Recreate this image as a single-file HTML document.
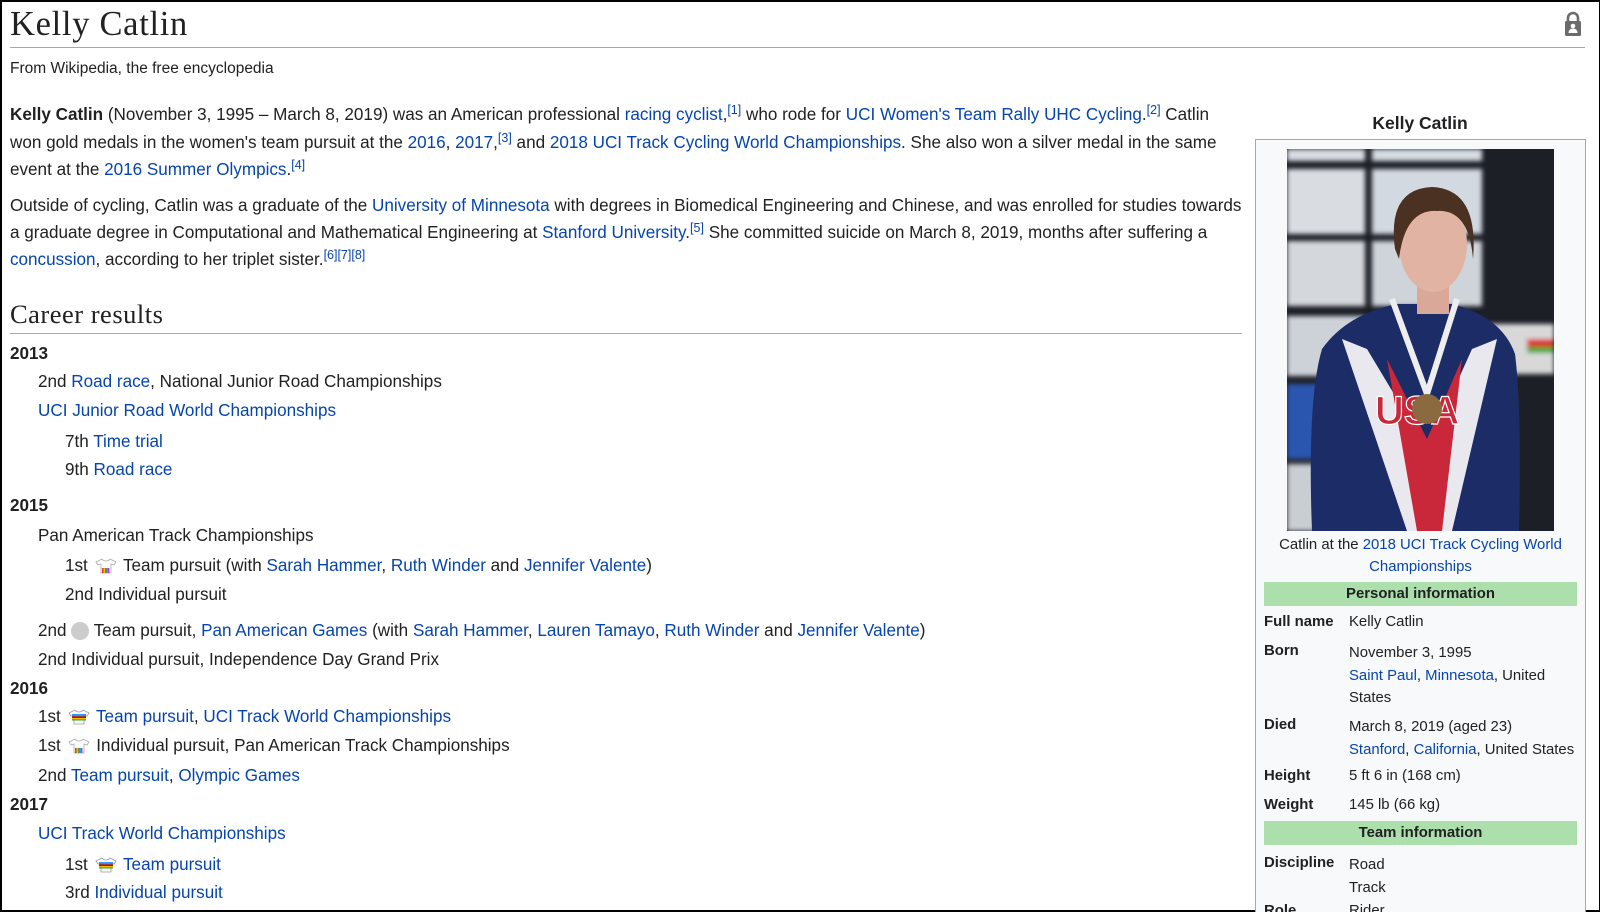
<!DOCTYPE html>
<html><head><meta charset="utf-8">
<style>
*{margin:0;padding:0;box-sizing:border-box}
html,body{width:1600px;height:912px;overflow:hidden;background:#fff}
body{font-family:"Liberation Sans",Arial,sans-serif;color:#202122;position:relative;border-left:2px solid #000;border-top:2px solid #000;border-right:1px solid #000;border-bottom:2px solid #000}
.a{position:absolute;white-space:nowrap}
.t{font-size:17.1px;line-height:20px}
a,.l{color:#0645ad;text-decoration:none}
sup{font-size:12.5px;vertical-align:6px;line-height:0;color:#0645ad}
b{font-weight:bold}
.h{font-family:"Liberation Serif",serif}
.ib{font-size:14.9px;line-height:18px}
.jer{display:inline-block;width:22px;height:16px;vertical-align:-3px;margin:0 2px}
</style></head><body>
<div class="a h" style="left:8px;top:2px;font-size:34.5px;line-height:40px;letter-spacing:0.7px">Kelly Catlin</div>
<div class="a" style="left:8px;top:45px;width:1575px;height:1px;background:#a2a9b1"></div>
<svg class="a" style="left:1562px;top:9px" width="18" height="26" viewBox="0 0 18 26"><path d="M4 11V7a5 5 0 0 1 10 0v4" fill="none" stroke="#6b6b6b" stroke-width="2.6"/><rect x="1" y="10" width="16" height="15" rx="1.5" fill="#6b6b6b"/><circle cx="9" cy="15" r="2.3" fill="#fff"/><path d="M4.5 22c0-3 2-4.5 4.5-4.5s4.5 1.5 4.5 4.5z" fill="#fff"/></svg>
<div class="a" style="left:8px;top:58px;font-size:15.5px">From Wikipedia, the free encyclopedia</div>

<div class="a t" style="left:8px;top:103px"><b>Kelly Catlin</b> (November 3, 1995 – March 8, 2019) was an American professional <a>racing cyclist</a>,<sup>[1]</sup> who rode for <a>UCI Women's Team Rally UHC Cycling</a>.<sup>[2]</sup> Catlin</div>
<div class="a t" style="left:8px;top:131px">won gold medals in the women's team pursuit at the <a>2016</a>, <a>2017</a>,<sup>[3]</sup> and <a>2018 UCI Track Cycling World Championships</a>. She also won a silver medal in the same</div>
<div class="a t" style="left:8px;top:158px">event at the <a>2016 Summer Olympics</a>.<sup>[4]</sup></div>
<div class="a t" style="left:8px;top:194px">Outside of cycling, Catlin was a graduate of the <a>University of Minnesota</a> with degrees in Biomedical Engineering and Chinese, and was enrolled for studies towards</div>
<div class="a t" style="left:8px;top:221px">a graduate degree in Computational and Mathematical Engineering at <a>Stanford University</a>.<sup>[5]</sup> She committed suicide on March 8, 2019, months after suffering a</div>
<div class="a t" style="left:8px;top:248px"><a>concussion</a>, according to her triplet sister.<sup>[6][7][8]</sup></div>

<div class="a h" style="left:8px;top:297px;font-size:26.5px;line-height:30px;letter-spacing:0.5px">Career results</div>
<div class="a" style="left:8px;top:331px;width:1232px;height:1px;background:#a2a9b1"></div>

<div class="a t" style="left:8px;top:342px"><b>2013</b></div>
<div class="a t" style="left:36px;top:370px">2nd <a>Road race</a>, National Junior Road Championships</div>
<div class="a t" style="left:36px;top:399px"><a>UCI Junior Road World Championships</a></div>
<div class="a t" style="left:63px;top:430px">7th <a>Time trial</a></div>
<div class="a t" style="left:63px;top:458px">9th <a>Road race</a></div>
<div class="a t" style="left:8px;top:494px"><b>2015</b></div>
<div class="a t" style="left:36px;top:524px">Pan American Track Championships</div>
<div class="a t" style="left:63px;top:554px">1st <svg class="jer" viewBox="0 0 22 16"><path d="M7 1L1 4l2 3 3-1v9h10V6l3 1 2-3-6-3c-1 1.5-2.5 2-4 2s-3-.5-4-2z" fill="#fff" stroke="#aaa" stroke-width=".8"/><rect x="7" y="10" width="1.5" height="5" fill="#e33"/><rect x="8.5" y="10" width="1.5" height="5" fill="#fb0"/><rect x="10" y="10" width="1.5" height="5" fill="#3a3"/><rect x="11.5" y="10" width="1.5" height="5" fill="#39f"/><rect x="13" y="10" width="1.5" height="5" fill="#c3c"/></svg> Team pursuit (with <a>Sarah Hammer</a>, <a>Ruth Winder</a> and <a>Jennifer Valente</a>)</div>
<div class="a t" style="left:63px;top:583px">2nd Individual pursuit</div>
<div class="a t" style="left:36px;top:619px">2nd <span style="display:inline-block;width:18px;height:18px;border-radius:50%;background:#ccc;vertical-align:-4px"></span> Team pursuit, <a>Pan American Games</a> (with <a>Sarah Hammer</a>, <a>Lauren Tamayo</a>, <a>Ruth Winder</a> and <a>Jennifer Valente</a>)</div>
<div class="a t" style="left:36px;top:648px">2nd Individual pursuit, Independence Day Grand Prix</div>
<div class="a t" style="left:8px;top:677px"><b>2016</b></div>
<div class="a t" style="left:36px;top:705px">1st <svg class="jer" viewBox="0 0 22 16"><path d="M7 1L1 4l2 3 3-1v9h10V6l3 1 2-3-6-3c-1 1.5-2.5 2-4 2s-3-.5-4-2z" fill="#fff" stroke="#999" stroke-width=".8"/><rect x="4" y="5" width="14" height="1.3" fill="#39f"/><rect x="4" y="6.3" width="14" height="1.3" fill="#e33"/><rect x="4" y="7.6" width="14" height="1.3" fill="#222"/><rect x="4" y="8.9" width="14" height="1.3" fill="#fb0"/><rect x="4" y="10.2" width="14" height="1.3" fill="#3a3"/></svg> <a>Team pursuit</a>, <a>UCI Track World Championships</a></div>
<div class="a t" style="left:36px;top:734px">1st <svg class="jer" viewBox="0 0 22 16"><path d="M7 1L1 4l2 3 3-1v9h10V6l3 1 2-3-6-3c-1 1.5-2.5 2-4 2s-3-.5-4-2z" fill="#fff" stroke="#aaa" stroke-width=".8"/><rect x="7" y="10" width="1.5" height="5" fill="#e33"/><rect x="8.5" y="10" width="1.5" height="5" fill="#fb0"/><rect x="10" y="10" width="1.5" height="5" fill="#3a3"/><rect x="11.5" y="10" width="1.5" height="5" fill="#39f"/><rect x="13" y="10" width="1.5" height="5" fill="#c3c"/></svg> Individual pursuit, Pan American Track Championships</div>
<div class="a t" style="left:36px;top:764px">2nd <a>Team pursuit</a>, <a>Olympic Games</a></div>
<div class="a t" style="left:8px;top:793px"><b>2017</b></div>
<div class="a t" style="left:36px;top:822px"><a>UCI Track World Championships</a></div>
<div class="a t" style="left:63px;top:853px">1st <svg class="jer" viewBox="0 0 22 16"><path d="M7 1L1 4l2 3 3-1v9h10V6l3 1 2-3-6-3c-1 1.5-2.5 2-4 2s-3-.5-4-2z" fill="#fff" stroke="#999" stroke-width=".8"/><rect x="4" y="5" width="14" height="1.3" fill="#39f"/><rect x="4" y="6.3" width="14" height="1.3" fill="#e33"/><rect x="4" y="7.6" width="14" height="1.3" fill="#222"/><rect x="4" y="8.9" width="14" height="1.3" fill="#fb0"/><rect x="4" y="10.2" width="14" height="1.3" fill="#3a3"/></svg> <a>Team pursuit</a></div>
<div class="a t" style="left:63px;top:881px">3rd <a>Individual pursuit</a></div>

<!-- infobox -->
<div class="a" style="left:1253px;top:111px;width:330px;text-align:center;font-weight:bold;font-size:17.5px">Kelly Catlin</div>
<div class="a" style="left:1253px;top:137px;width:331px;height:790px;background:#f8f9fa;border:1px solid #a2a9b1"></div>
<svg class="a" style="left:1285px;top:147px" width="267" height="382" viewBox="0 0 267 382">
<defs><filter id="bl"><feGaussianBlur stdDeviation="2.5"/></filter></defs>
<rect width="267" height="382" fill="#1c1f26"/>
<g filter="url(#bl)">
<rect x="0" y="0" width="78" height="12" fill="#d8dde3"/><rect x="85" y="0" width="110" height="12" fill="#d6dce3"/>
<rect x="0" y="20" width="78" height="65" fill="#d9dde2"/><rect x="85" y="20" width="110" height="65" fill="#d3d9e0"/>
<rect x="0" y="92" width="78" height="65" fill="#d4d8dd"/><rect x="85" y="92" width="110" height="65" fill="#cfd4da"/>
<rect x="0" y="167" width="78" height="60" fill="#cdd2d8"/><rect x="0" y="235" width="40" height="75" fill="#2a57b0"/><rect x="0" y="315" width="60" height="67" fill="#c9ced3"/>
<rect x="200" y="175" width="67" height="50" fill="#d8d8d8"/><rect x="240" y="190" width="27" height="8" fill="#d33"/><rect x="240" y="198" width="27" height="6" fill="#3a3"/>
</g>
<path d="M25 382 Q20 250 35 200 Q60 165 110 155 L165 155 Q215 168 228 205 Q235 260 232 382 Z" fill="#1b2c66"/>
<path d="M55 190 L120 382 L165 382 L210 190 L185 200 L140 300 L80 200 Z" fill="#e8e8ee"/>
<path d="M100 210 L130 382 L155 382 L175 210 L140 290 Z" fill="#c8283a"/>
<text x="88" y="275" font-family="Liberation Sans" font-weight="bold" font-size="40" fill="#c8283a" stroke="#fff" stroke-width="1.2">USA</text>
<path d="M105 150 L140 245 L170 150" fill="none" stroke="#eee" stroke-width="6"/>
<circle cx="140" cy="260" r="15" fill="#8a6a3e"/>
<rect x="130" y="125" width="32" height="40" fill="#d9a898"/>
<ellipse cx="146" cy="95" rx="34" ry="48" fill="#e0b3a2"/>
<path d="M108 100 Q100 40 145 38 Q192 40 186 110 Q182 60 150 62 Q118 60 112 110 Z" fill="#4a3122"/>
</svg>
<div class="a ib" style="left:1253px;top:532px;width:331px;text-align:center;line-height:22px;white-space:normal;padding:0 12px">Catlin at the <a>2018 UCI Track Cycling World Championships</a></div>
<div class="a ib" style="left:1262px;top:580px;width:313px;height:24px;background:#addfad;text-align:center;font-weight:bold;line-height:24px">Personal information</div>
<div class="a ib" style="left:1262px;top:611px;font-weight:bold">Full name</div><div class="a ib" style="left:1347px;top:611px">Kelly Catlin</div>
<div class="a ib" style="left:1262px;top:640px;font-weight:bold">Born</div>
<div class="a ib" style="left:1347px;top:640px;line-height:22.7px">November 3, 1995<br><a>Saint Paul</a>, <a>Minnesota</a>, United<br>States</div>
<div class="a ib" style="left:1262px;top:714px;font-weight:bold">Died</div>
<div class="a ib" style="left:1347px;top:714px;line-height:22.7px">March 8, 2019 (aged 23)<br><a>Stanford</a>, <a>California</a>, United States</div>
<div class="a ib" style="left:1262px;top:765px;font-weight:bold">Height</div><div class="a ib" style="left:1347px;top:765px">5 ft 6 in (168 cm)</div>
<div class="a ib" style="left:1262px;top:794px;font-weight:bold">Weight</div><div class="a ib" style="left:1347px;top:794px">145 lb (66 kg)</div>
<div class="a ib" style="left:1262px;top:819px;width:313px;height:24px;background:#addfad;text-align:center;font-weight:bold;line-height:24px">Team information</div>
<div class="a ib" style="left:1262px;top:852px;font-weight:bold">Discipline</div>
<div class="a ib" style="left:1347px;top:852px;line-height:22.7px">Road<br>Track</div>
<div class="a ib" style="left:1262px;top:900px;font-weight:bold">Role</div><div class="a ib" style="left:1347px;top:900px">Rider</div>
</body></html>
